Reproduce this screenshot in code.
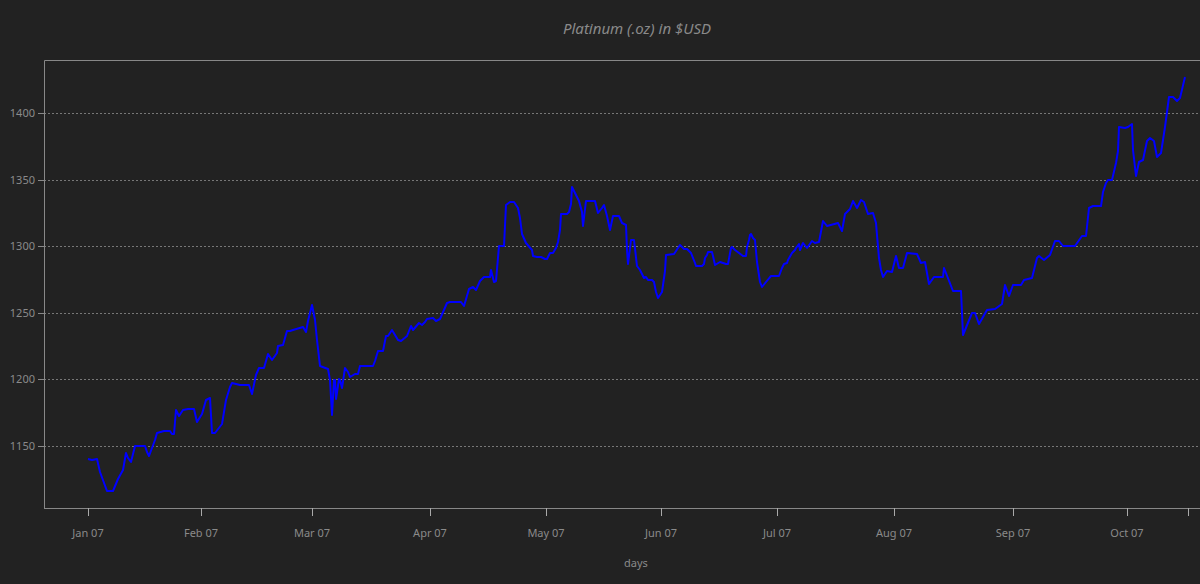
const pts = [
  [88,459],[92,460],[97,459],[100,472],[107,491],[113,491],[118,479],[123,470],[126,453],[128,458],[131,462],[135,446],[145,446],[147,452],[149,456],[155,440],[157,433],[164,431],[170,431],[172,434],[174,434],[176,410],[179,416],[183,410],[188,409],[194,409],[197,422],[202,414],[206,400],[210,398],[212,433],[215,433],[222,424],[226,400],[230,387],[232,383],[240,385],[249,385],[252,394],[256,375],[259,368],[264,368],[268,354],[272,360],[277,353],[278,346],[283,345],[287,331],[290,331],[293,330],[303,327],[306,332],[308,321],[312,305],[315,320],[317,340],[320,366],[328,369],[330,380],[332,415],[334,380],[335,380],[336,399],[339,379],[340,380],[342,388],[345,368],[348,372],[350,377],[355,374],[358,374],[360,366],[373,366],[375,361],[378,351],[383,351],[386,336],[388,336],[392,330],[398,340],[401,341],[407,336],[411,326],[413,330],[419,323],[422,325],[425,322],[427,319],[433,318],[436,321],[440,319],
  [447,303],[450,302],[461,302],[464,306],[469,289],[473,287],[476,290],[480,281],[484,277],[490,277],[491,270],[494,282],[496,281],[499,246],[504,246],[506,205],[510,202],[514,202],[518,208],[520,218],[522,234],[526,243],[532,250],[533,256],[537,257],[541,257],[545,259],[547,259],[550,253],[553,253],[556,248],[558,242],[560,230],[561,214],[567,214],[569,212],[571,204],[572,187],[575,193],[579,201],[582,212],[583,226],[586,201],[595,201],[596,205],[598,213],[602,208],[604,205],[607,216],[610,230],[613,216],[619,216],[622,223],[626,225],[627,250],[628,264],[631,240],[634,240],[637,266],[640,270],[644,278],[646,277],[648,280],[652,280],[654,282],[656,292],[658,298],[660,295],[662,292],[665,271],[666,255],[674,254],[678,248],[680,245],[684,249],[687,249],[691,253],[695,263],[696,266],[702,266],[704,264],[705,258],[707,255],[708,252],[712,252],[713,256],[715,265],[720,262],[726,264],[728,264],[731,248],[732,247],[735,250],[739,253],[743,256],[746,256],[747,247],[749,240],[750,235],[751,234],[753,238],[755,240],[757,262],[760,282],[762,287],[766,282],[771,276],[779,276],[782,268],[784,264],[787,263],[788,260],[792,253],[795,250],[796,248],[799,244],[800,250],
  [803,243],[807,248],[812,241],[815,243],[819,242],[823,221],[827,226],[838,223],[842,231],[845,214],[850,209],[853,201],[857,208],[861,200],[864,202],[868,214],[873,213],[876,223],[877,235],[879,258],[881,270],[883,277],[887,271],[892,272],[896,256],[899,268],[903,268],[907,253],[917,254],[921,263],[925,262],[929,284],[934,277],[943,277],[944,268],[953,291],[961,291],[963,335],[972,313],[975,313],[979,324],[987,310],[995,309],[1002,304],[1005,285],[1009,296],[1013,285],[1021,285],[1024,280],[1032,278],[1037,258],[1039,256],[1044,260],[1050,255],[1055,241],[1059,241],[1063,246],[1075,246],[1082,236],[1086,236],[1089,208],[1093,206],[1101,206],[1103,192],[1106,183],[1108,180],[1112,180],[1116,163],[1118,151],[1119,127],[1125,128],[1128,127],[1132,124],[1133,150],[1136,176],[1139,162],[1143,160],[1147,141],[1150,138],[1154,141],[1157,157],[1161,153],[1165,127],[1169,97],[1173,97],[1177,101],[1180,98],[1185,77],
];

const yTicks = [[1400,113],[1350,180],[1300,246],[1250,313],[1200,379],[1150,446]];
const xTicks = [["Jan 07",88],["Feb 07",201],["Mar 07",312],["Apr 07",430],["May 07",546],["Jun 07",661],["Jul 07",777],["Aug 07",894],["Sep 07",1013],["Oct 07",1127],["",1188]];

export default function App() {
  return (
    <div className="h-[584px] w-[1200px] overflow-hidden bg-[#222222] font-['Liberation_Sans',Arial,sans-serif]">
      <svg width="1200" height="584" viewBox="0 0 1200 584">
        <text x="637" y="34" textAnchor="middle" fill="#8a8a8a" fontSize="15" fontStyle="italic">Platinum (.oz) in $USD</text>
        {yTicks.map(([v, y]) => (
          <g key={v}>
            <line x1="44" x2="1200" y1={y + 0.5} y2={y + 0.5} stroke="#777" strokeDasharray="2 2" />
            <line x1="38" x2="44" y1={y + 0.5} y2={y + 0.5} stroke="#888" />
            <text x="35" y={y + 4} textAnchor="end" fill="#8a8a8a" fontSize="11">{v}</text>
          </g>
        ))}
        <polyline points="44.5,508 44.5,60.5 1200,60.5" fill="none" stroke="#888" />
        <line x1="44" x2="1200" y1="508.5" y2="508.5" stroke="#888" />
        {xTicks.map(([l, x]) => (
          <g key={x}>
            <line x1={x + 0.5} x2={x + 0.5} y1="508" y2="516" stroke="#aaa" />
            {l && <text x={x} y="537" textAnchor="middle" fill="#8a8a8a" fontSize="11">{l}</text>}
          </g>
        ))}
        <text x="636" y="567" textAnchor="middle" fill="#8a8a8a" fontSize="11">days</text>
        <polyline points={pts.map((p) => p.join(",")).join(" ")} fill="none" stroke="#0000ff" strokeWidth="2" strokeLinejoin="round" />
      </svg>
    </div>
  );
}
